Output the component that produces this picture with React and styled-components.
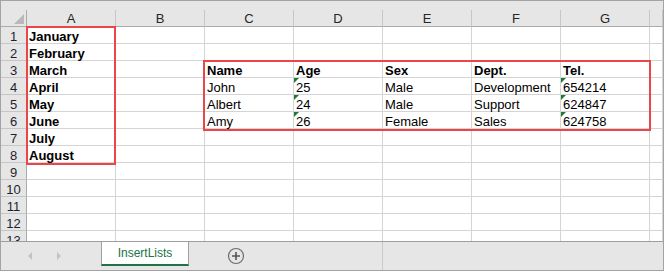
import React from 'react';
import styled, { createGlobalStyle } from 'styled-components';

const GlobalStyle = createGlobalStyle`
  html, body {
    margin: 0;
    padding: 0;
    background: #ffffff;
  }
  body {
    font-family: "Liberation Sans", Arial, sans-serif;
  }
`

const Frame = styled.div`
  width: 664px;
  height: 271px;
  box-sizing: border-box;
  border: 1px solid #a3a3a3;
  background: #ffffff;
  display: flex;
  flex-direction: column;
  overflow: hidden;
`
const TopStrip = styled.div`
  height: 9px;
  flex: none;
  background: #e6e6e6;
`
const Sheet = styled.div`
  position: relative;
  height: 231px;
  flex: none;
  overflow: hidden;
  display: grid;
  grid-template-columns: 26px repeat(7, 89px) 1fr;
  grid-auto-rows: 17px;
`
const Cell = styled.div`
  position: relative;
  box-sizing: border-box;
  border-right: 1px solid #d4d4d4;
  border-bottom: 1px solid #d4d4d4;
  padding: 1px 0 0 2px;
  font-size: 13px;
  line-height: 17px;
  color: #000;
  white-space: nowrap;
  font-weight: ${p => (p.$bold ? 700 : 400)};
`
const ColHead = styled.div`
  box-sizing: border-box;
  background: #e6e6e6;
  border-right: 1px solid #c6c6c6;
  border-bottom: 1px solid #ababab;
  font-size: 13px;
  line-height: 17px;
  text-align: center;
  color: #262626;
`
const Corner = styled(ColHead)`
  position: relative;
  border-right: 1px solid #ababab;
`
const CornerMark = styled.div`
  position: absolute;
  right: 2px;
  bottom: 2px;
  width: 0;
  height: 0;
  border-left: 10px solid transparent;
  border-bottom: 10px solid #b9b9b9;
`
const RowHead = styled.div`
  box-sizing: border-box;
  background: #e6e6e6;
  border-right: 1px solid #ababab;
  border-bottom: 1px solid #c6c6c6;
  padding-top: 1px;
  font-size: 13px;
  line-height: 17px;
  text-align: center;
  color: #1f1f2f;
`
const TextFlag = styled.span`
  position: absolute;
  left: 0;
  top: 0;
  width: 0;
  height: 0;
  border-top: 5px solid #1e7b34;
  border-right: 5px solid transparent;
`
const Outline = styled.div`
  position: absolute;
  box-sizing: border-box;
  border: 2px solid #e8464a;
  pointer-events: none;
`
const TabBar = styled.div`
  flex: 1;
  display: flex;
  align-items: flex-start;
  background: #e6e6e6;
  border-top: 1px solid #9e9e9e;
`
const TabNav = styled.div`
  width: 100px;
  height: 100%;
  display: flex;
  align-items: center;
  gap: 25px;
  padding-left: 27px;
  box-sizing: border-box;
`
const Arrow = styled.span`
  width: 0;
  height: 0;
  border-top: 4px solid transparent;
  border-bottom: 4px solid transparent;
  ${p => (p.$dir === 'left'
    ? 'border-right: 4px solid #c2c2c2;'
    : 'border-left: 4px solid #c2c2c2;')}
`
const Tab = styled.div`
  width: 88px;
  height: 24px;
  box-sizing: border-box;
  background: #ffffff;
  border-left: 1px solid #a0a0a0;
  border-right: 1px solid #a0a0a0;
  border-bottom: 2px solid #217346;
  padding-top: 1px;
  text-align: center;
  font-size: 12px;
  line-height: 21px;
  color: #217346;
`
const AddSlot = styled.div`
  width: 93px;
  height: 100%;
  display: flex;
  align-items: center;
  justify-content: center;
  padding-bottom: 1px;
  box-sizing: border-box;
`
const Spacer = styled.div`
  width: 100px;
  height: 100%;
  border-right: 1px solid #cacaca;
`
const months = ['January', 'February', 'March', 'April', 'May', 'June', 'July', 'August'];
const table = {
  3: [['Name'], ['Age'], ['Sex'], ['Dept.'], ['Tel.']],
  4: [['John'], ['25', true], ['Male'], ['Development'], ['654214', true]],
  5: [['Albert'], ['24', true], ['Male'], ['Support'], ['624847', true]],
  6: [['Amy'], ['26', true], ['Female'], ['Sales'], ['624758', true]],
};
const letters = ['A', 'B', 'C', 'D', 'E', 'F', 'G', ''];

function PlusIcon() {
  return (
    <svg width="18" height="18" viewBox="0 0 18 18">
      <circle cx="9" cy="9" r="7.5" fill="none" stroke="#6b6b6b" strokeWidth="1.2" />
      <path d="M9 5v8M5 9h8" stroke="#555" strokeWidth="1.6" />
    </svg>
  );
}

function App() {
  const rows = [];
  for (let r = 1; r <= 13; r++) {
    const cells = [];
    for (let c = 0; c < 8; c++) {
      let text = '';
      let bold = false;
      let flag = false;
      if (c === 0 && r <= 8) {
        text = months[r - 1];
        bold = true;
      }
      if (c >= 2 && c <= 6 && table[r]) {
        const [t, f] = table[r][c - 2];
        text = t;
        flag = !!f;
        bold = r === 3;
      }
      cells.push(
        <Cell key={c} $bold={bold}>
          {flag && <TextFlag />}
          {text}
        </Cell>
      );
    }
    rows.push(
      <React.Fragment key={r}>
        <RowHead>{r}</RowHead>
        {cells}
      </React.Fragment>
    );
  }

  return (
    <Frame>
      <GlobalStyle />
      <TopStrip />
      <Sheet>
        <Corner><CornerMark /></Corner>
        {letters.map((l, i) => <ColHead key={i}>{l}</ColHead>)}
        {rows}
        <Outline style={{ left: 25, top: 16, width: 90, height: 139 }} />
        <Outline style={{ left: 202, top: 50, width: 448, height: 71 }} />
      </Sheet>
      <TabBar>
        <TabNav>
          <Arrow $dir="left" />
          <Arrow $dir="right" />
        </TabNav>
        <Tab>InsertLists</Tab>
        <AddSlot><PlusIcon /></AddSlot>
        <Spacer />
      </TabBar>
    </Frame>
  );
}

export default App;
